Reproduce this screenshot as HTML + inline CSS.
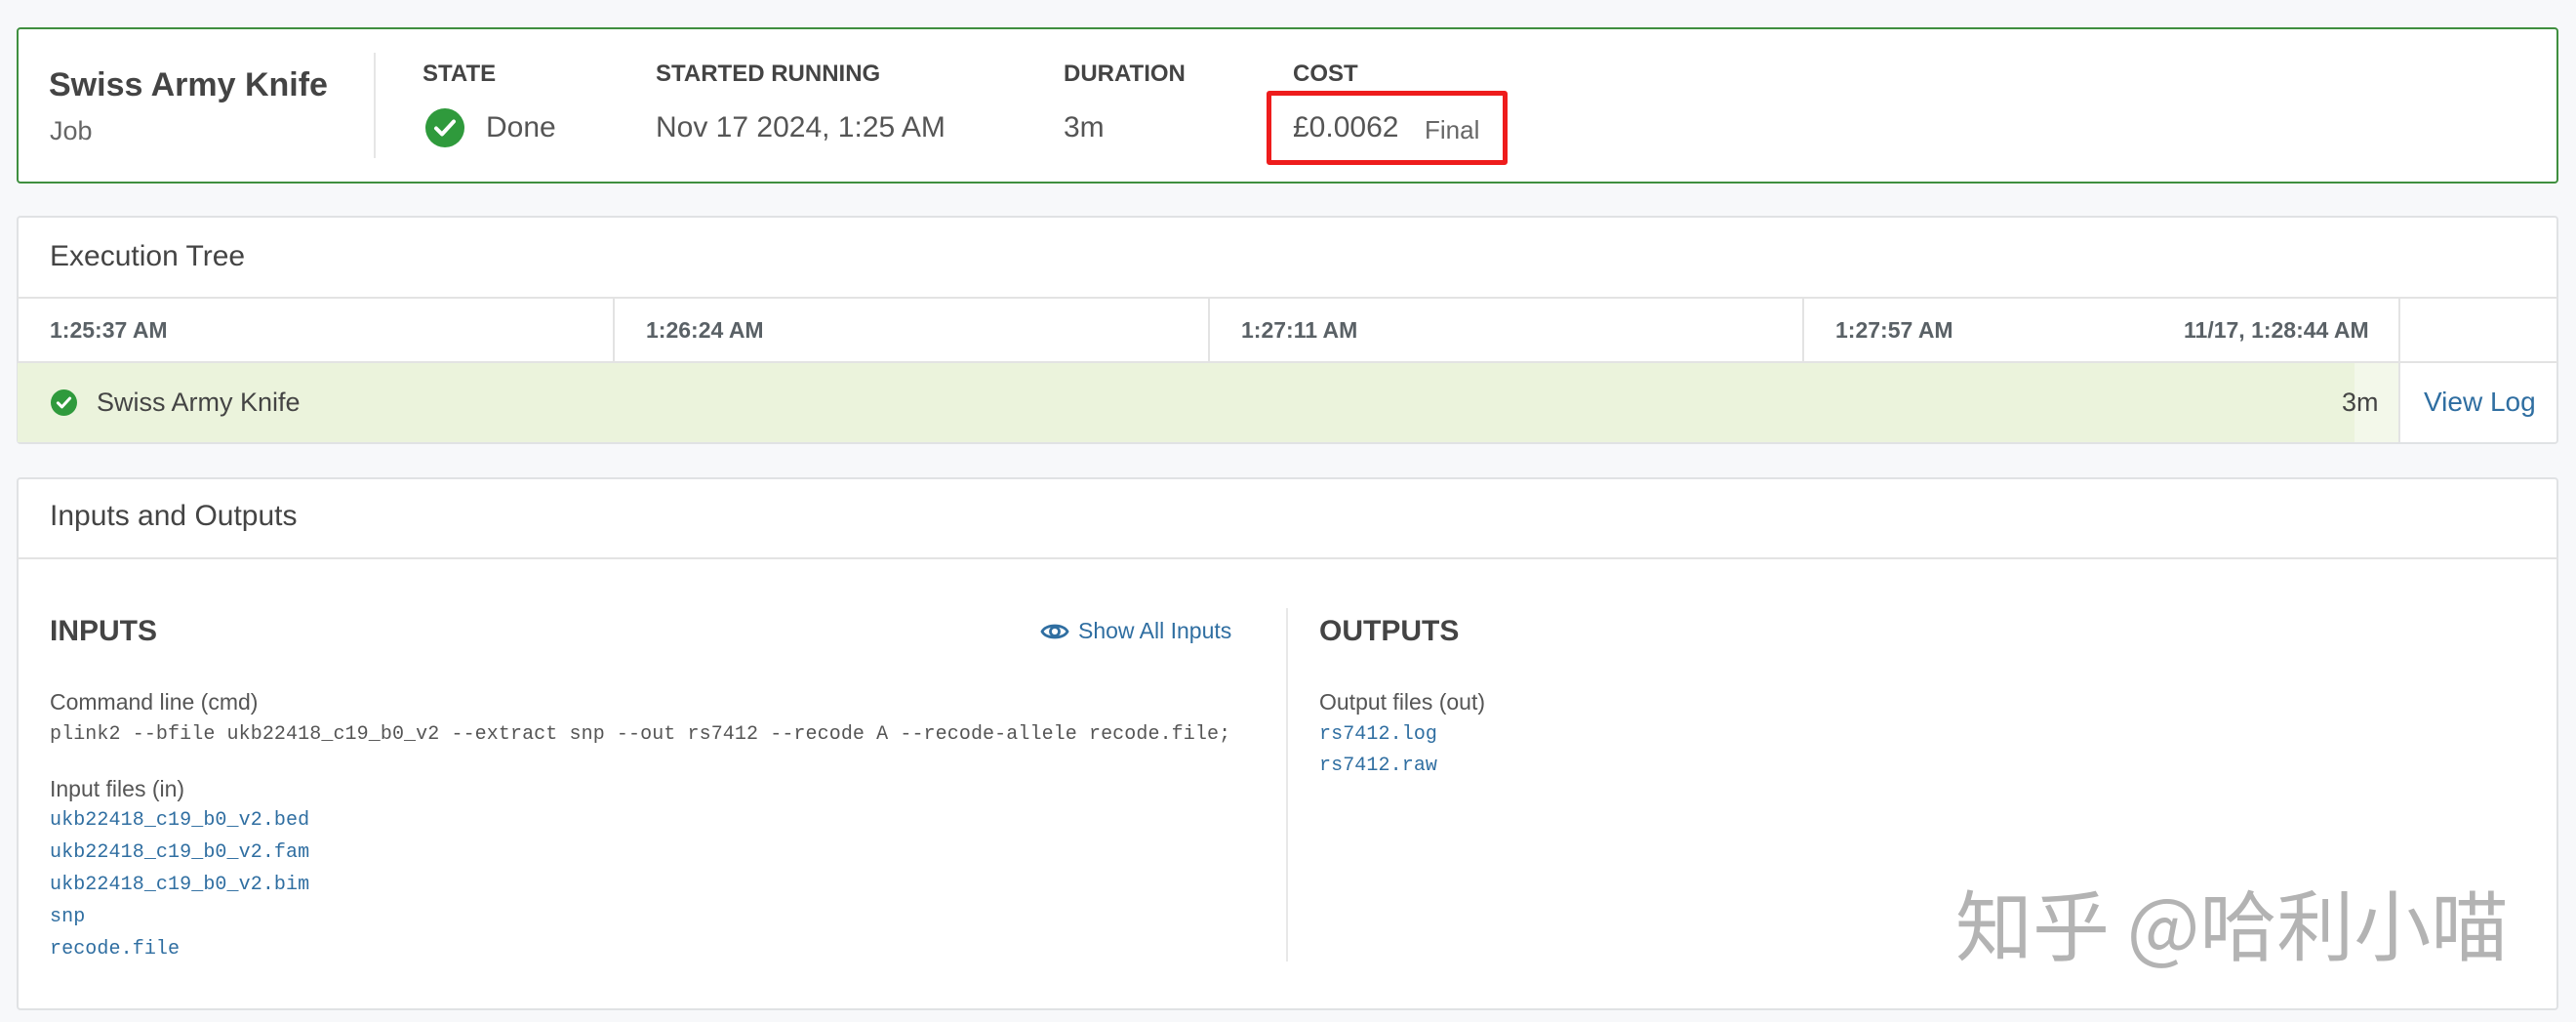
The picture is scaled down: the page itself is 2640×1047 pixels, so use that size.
<!DOCTYPE html>
<html><head><meta charset="utf-8"><style>
*{box-sizing:border-box;margin:0;padding:0}
body{width:2640px;height:1047px;background:#f7f8fa;font-family:"Liberation Sans","Noto Sans CJK SC",sans-serif;color:#444;position:relative;overflow:hidden}
.abs{position:absolute;white-space:nowrap}
.card{position:absolute;background:#fff;border:2px solid #e0e2e4;border-radius:4px}
.lbl{font-size:24px;font-weight:bold;color:#444}
.val{font-size:30px;color:#555}
.ts{font-size:23px;color:#5a6166;font-weight:bold}
.mono{font-family:"Liberation Mono",monospace;font-size:20px;letter-spacing:0.1px;color:#555}
.link{color:#2f6ea1}
</style></head><body>
<div class="card" style="left:17px;top:28px;width:2605px;height:160px;border-color:#3f8f3f"></div>
<div class="abs" style="left:50px;top:68px;font-size:34px;font-weight:bold;color:#444">Swiss Army Knife</div>
<div class="abs" style="left:51px;top:119px;font-size:27px;color:#666">Job</div>
<div class="abs" style="left:383px;top:54px;width:2px;height:108px;background:#e6e6e6"></div>
<div class="abs lbl" style="left:433px;top:62px">STATE</div>
<svg class="abs" style="left:436px;top:111px" width="40" height="40" viewBox="0 0 40 40"><circle cx="20" cy="20" r="20" fill="#2f9a3c"/><path d="M11 20.5l6 6 12-13" stroke="#fff" stroke-width="4" fill="none" stroke-linecap="round" stroke-linejoin="round"/></svg>
<div class="abs val" style="left:498px;top:114px">Done</div>
<div class="abs lbl" style="left:672px;top:62px">STARTED RUNNING</div>
<div class="abs val" style="left:672px;top:114px">Nov 17 2024, 1:25 AM</div>
<div class="abs lbl" style="left:1090px;top:62px">DURATION</div>
<div class="abs val" style="left:1090px;top:114px">3m</div>
<div class="abs lbl" style="left:1325px;top:62px">COST</div>
<div class="abs val" style="left:1325px;top:114px">£0.0062</div>
<div class="abs" style="left:1460px;top:118px;font-size:26px;color:#666">Final</div>
<div class="abs" style="left:1298px;top:93px;width:247px;height:76px;border:5px solid #ee1c1c;border-radius:3px"></div>

<div class="card" style="left:17px;top:221px;width:2605px;height:234px"></div>
<div class="abs" style="left:51px;top:246px;font-size:30px;color:#444">Execution Tree</div>
<div class="abs" style="left:18px;top:304px;width:2603px;height:2px;background:#e3e3e3"></div>
<div class="abs" style="left:18px;top:370px;width:2603px;height:2px;background:#e3e3e3"></div>
<div class="abs" style="left:628px;top:305px;width:2px;height:66px;background:#e3e3e3"></div>
<div class="abs" style="left:1238px;top:305px;width:2px;height:66px;background:#e3e3e3"></div>
<div class="abs" style="left:1847px;top:305px;width:2px;height:66px;background:#e3e3e3"></div>
<div class="abs" style="left:2458px;top:305px;width:2px;height:148px;background:#e3e3e3"></div>
<div class="abs ts" style="left:51px;top:325px">1:25:37 AM</div>
<div class="abs ts" style="left:662px;top:325px">1:26:24 AM</div>
<div class="abs ts" style="left:1272px;top:325px">1:27:11 AM</div>
<div class="abs ts" style="left:1881px;top:325px">1:27:57 AM</div>
<div class="abs ts" style="left:2238px;top:325px">11/17, 1:28:44 AM</div>
<div class="abs" style="left:18px;top:372px;width:2395px;height:81px;background:#ebf3dc"></div>
<div class="abs" style="left:2413px;top:372px;width:45px;height:81px;background:#f3f8ea"></div>
<svg class="abs" style="left:52px;top:399px" width="27" height="27" viewBox="0 0 40 40"><circle cx="20" cy="20" r="20" fill="#2f9a3c"/><path d="M11 20.5l6 6 12-13" stroke="#fff" stroke-width="4.5" fill="none" stroke-linecap="round" stroke-linejoin="round"/></svg>
<div class="abs" style="left:99px;top:397px;font-size:27px;color:#444">Swiss Army Knife</div>
<div class="abs" style="left:2400px;top:397px;font-size:27px;color:#444">3m</div>
<div class="abs link" style="left:2484px;top:396px;font-size:28px">View Log</div>

<div class="card" style="left:17px;top:489px;width:2605px;height:546px"></div>
<div class="abs" style="left:51px;top:512px;font-size:30px;color:#444">Inputs and Outputs</div>
<div class="abs" style="left:18px;top:571px;width:2603px;height:2px;background:#e3e3e3"></div>
<div class="abs" style="left:51px;top:630px;font-size:30px;font-weight:bold;color:#444">INPUTS</div>
<svg class="abs" style="left:1066px;top:635px" width="30" height="24" viewBox="0 0 30 24"><path d="M2 12C6 4 24 4 28 12C24 20 6 20 2 12Z" fill="none" stroke="#2f6ea1" stroke-width="2.8"/><circle cx="15" cy="12" r="4.5" fill="none" stroke="#2f6ea1" stroke-width="2.8"/></svg>
<div class="abs link" style="left:1105px;top:633px;font-size:23px">Show All Inputs</div>
<div class="abs" style="left:1318px;top:623px;width:2px;height:362px;background:#e8e8e8"></div>
<div class="abs" style="left:1352px;top:630px;font-size:30px;font-weight:bold;color:#444">OUTPUTS</div>
<div class="abs" style="left:51px;top:706px;font-size:23px;color:#555">Command line (cmd)</div>
<div class="abs mono" style="left:51px;top:741px">plink2 --bfile ukb22418_c19_b0_v2 --extract snp --out rs7412 --recode A --recode-allele recode.file;</div>
<div class="abs" style="left:51px;top:795px;font-size:23px;color:#555">Input files (in)</div>
<div class="abs mono link" style="left:51px;top:829px">ukb22418_c19_b0_v2.bed</div>
<div class="abs mono link" style="left:51px;top:862px">ukb22418_c19_b0_v2.fam</div>
<div class="abs mono link" style="left:51px;top:895px">ukb22418_c19_b0_v2.bim</div>
<div class="abs mono link" style="left:51px;top:928px">snp</div>
<div class="abs mono link" style="left:51px;top:961px">recode.file</div>
<div class="abs" style="left:1352px;top:706px;font-size:23px;color:#555">Output files (out)</div>
<div class="abs mono link" style="left:1352px;top:741px">rs7412.log</div>
<div class="abs mono link" style="left:1352px;top:773px">rs7412.raw</div>
<div class="abs" style="left:2004px;top:886px;font-size:79px;color:#b3b3b3;font-family:'Noto Sans CJK SC',sans-serif">知乎 @哈利小喵</div>
</body></html>
